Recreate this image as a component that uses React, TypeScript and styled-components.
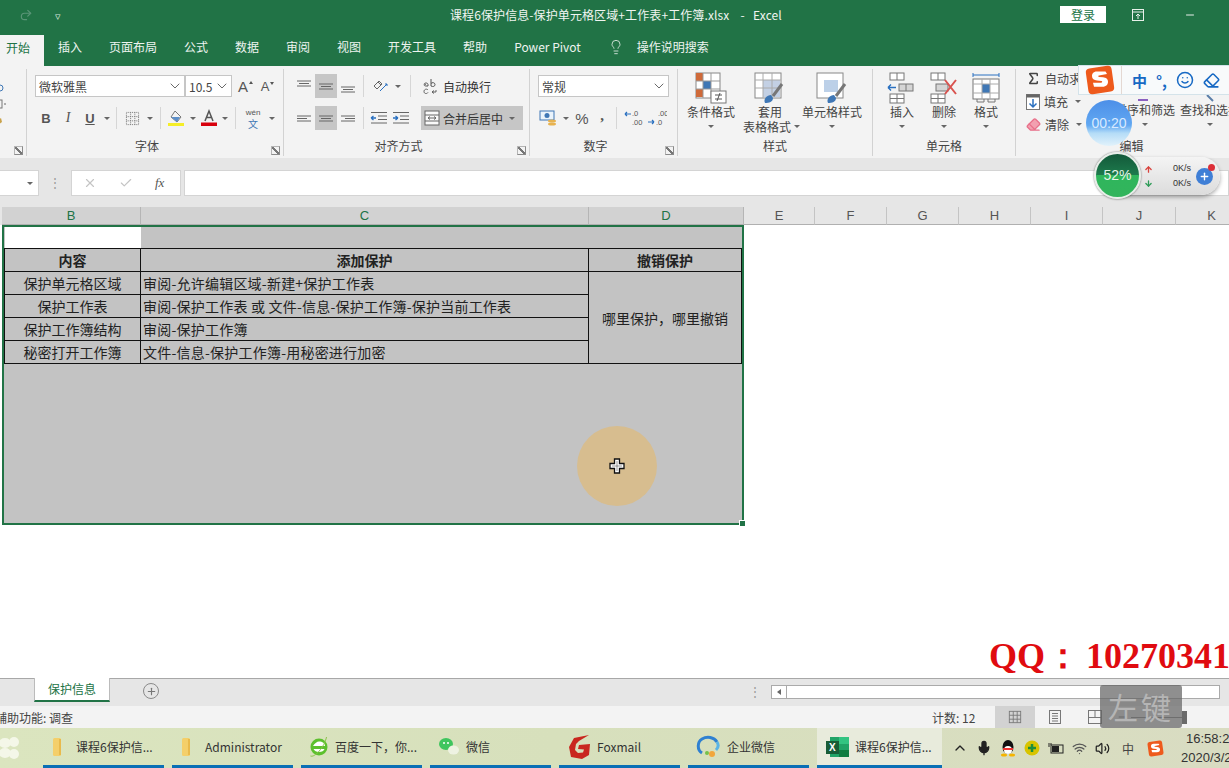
import React from "react";
import styled, { createGlobalStyle } from "styled-components";
import { Lightbulb, ChevronDown, Check, X, Plus, Mic, Wifi, Volume2, ChevronUp, Sigma, Eraser, ArrowDown, ArrowUp, Minus, Redo2, Smile } from "lucide-react";

const GlobalStyle = createGlobalStyle`
  html, body { margin: 0; padding: 0; height: 100%; overflow: hidden; background: #fff; }
  body { font-family: "Noto Sans CJK SC", "Liberation Sans", sans-serif; font-size: 12px; color: #333; }
  #root { height: 100%; }
`;

const Page = styled.div`
  position: relative;
  width: 1229px;
  height: 768px;
  overflow: hidden;
  display: flex;
  flex-direction: column;
`;

/* title bar + tabs */
const TitleBar = styled.div`
  height: 33px;
  background: #217346;
  color: #f0f5f1;
  display: flex;
  align-items: center;
  flex: none;
  padding-bottom: 4px;
  box-sizing: border-box;
`;
const Qat = styled.div`
  width: 450px;
  flex: none;
  display: flex;
  align-items: center;
  gap: 22px;
  padding-left: 19px;
  box-sizing: border-box;
  color: #d5e5da;
  font-size: 11px;
`;
const Title = styled.div`
  width: 610px;
  flex: none;
  white-space: pre;
  letter-spacing: 0.1px;
`;
const Login = styled.div`
  width: 46px;
  height: 17px;
  flex: none;
  line-height: 17px;
  background: #fff;
  color: #217346;
  text-align: center;
  margin-right: 6px;
`;
const WinBtn = styled.div`
  width: 52px;
  flex: none;
  display: flex;
  justify-content: center;
  color: #e8f0ea;
`;
const TabRow = styled.div`
  height: 33px;
  background: #217346;
  display: flex;
  align-items: flex-start;
  flex: none;
  color: #eef4f0;
  gap: 27px;
`;
const ActiveTab = styled.div`
  width: 44px;
  height: 31px;
  margin-top: 2px;
  line-height: 25px;
  background: #f3f3f3;
  color: #217346;
  padding-left: 6px;
  box-sizing: border-box;
  margin-right: -13px;
`;
const TabItem = styled.div`
  height: 28px;
  line-height: 28px;
  display: flex;
  align-items: center;
  gap: 13px;
`;

/* ribbon */
const Ribbon = styled.div`
  height: 92px;
  background: #f3f3f3;
  flex: none;
  display: flex;
`;
const Group = styled.div<{ $w: number }>`
  position: relative;
  width: ${(p) => p.$w}px;
  flex: none;
  box-sizing: border-box;
  border-right: 1px solid #d2d2d2;
  margin: 3px 0 2px;
  display: flex;
  flex-direction: column;
`;
const GroupBody = styled.div<{ $pad?: number }>`
  flex: 1;
  min-height: 0;
  padding: 5px 0 0 ${(p) => p.$pad ?? 8}px;
  display: flex;
  flex-direction: column;
  gap: 8px;
`;
const StackBody = styled.div<{ $pad?: number }>`
  flex: 1;
  min-height: 0;
  display: flex;
  padding-left: ${(p) => p.$pad ?? 0}px;
`;
const GroupLabel = styled.div<{ $launcher?: boolean }>`
  height: 22px;
  line-height: 24px;
  text-align: center;
  color: #444;
  flex: none;
  padding-right: ${(p) => (p.$launcher ? 16 : 0)}px;
`;
const Launcher = styled.div`
  position: absolute;
  right: 3px;
  bottom: 1px;
  width: 7px;
  height: 7px;
  border: 1px solid #8a8a8a;
  border-top-color: #b5b5b5;
  border-left-color: #b5b5b5;
  background: linear-gradient(45deg, transparent 42%, #777 42% 58%, transparent 58%);
`;
const ClipStub = styled.div`
  margin: 15px 0 0 -4px;
`;
const ToolRow = styled.div`
  display: flex;
  align-items: center;
  height: 24px;
`;
const Combo = styled.div<{ $w: number }>`
  width: ${(p) => p.$w}px;
  height: 22px;
  box-sizing: border-box;
  background: #fff;
  border: 1px solid #c6c6c6;
  display: flex;
  align-items: center;
  justify-content: space-between;
  padding: 0 1px 0 3px;
  color: #444;
  flex: none;
  overflow: hidden;
`;
const Tool = styled.div<{ $w?: number; $on?: boolean }>`
  width: ${(p) => p.$w ?? 22}px;
  height: 24px;
  flex: none;
  display: flex;
  align-items: center;
  justify-content: center;
  color: #555;
  background: ${(p) => (p.$on ? "#c6c6c6" : "transparent")};
  font-size: 12px;
`;
const GrowFont = styled.span<{ $big?: boolean; $down?: boolean }>`
  position: relative;
  font-family: "Liberation Sans", sans-serif;
  font-size: ${(p) => (p.$big ? 15 : 13)}px;
  color: #555;
  &::after {
    content: "";
    position: absolute;
    right: -5px;
    top: 3px;
    border: 2.5px solid transparent;
    border-top: 0;
    border-bottom: 3px solid #555;
    transform: ${(p) => (p.$down ? "rotate(180deg)" : "none")};
  }
`;
const BoldMark = styled.span`
  font-family: "Liberation Sans", sans-serif;
  font-weight: 700;
  font-size: 13px;
  color: #555;
`;
const ItalicMark = styled.span`
  font-family: "Liberation Serif", serif;
  font-style: italic;
  font-size: 14px;
  color: #555;
`;
const UnderMark = styled.span`
  font-family: "Liberation Sans", sans-serif;
  font-weight: 700;
  font-size: 13px;
  color: #555;
  text-decoration: underline;
`;
const PercentMark = styled.span`
  font-family: "Liberation Sans", sans-serif;
  font-size: 15px;
  color: #555;
`;
const CommaMark = styled.span`
  font-family: "Liberation Serif", serif;
  font-weight: 700;
  font-size: 15px;
  color: #555;
  margin-top: -6px;
`;
const Wen = styled.div`
  display: flex;
  flex-direction: column;
  align-items: center;
  gap: 1px;
  font-family: "Liberation Sans", sans-serif;
  font-size: 8px;
  line-height: 9px;
  color: #555;
`;
const WenGlyph = styled.span`
  font-family: "Noto Sans CJK SC", sans-serif;
  font-size: 10px;
  line-height: 11px;
  color: #3f77b5;
`;
const Caret = styled.span`
  width: 0;
  height: 0;
  border: 3px solid transparent;
  border-top: 3px solid #666;
  border-bottom: 0;
  margin: 0 3px;
  flex: none;
  display: inline-block;
`;
const BigCaret = styled(Caret)`
  margin-top: 6px;
`;
const Sep = styled.div<{ $m?: number }>`
  width: 1px;
  height: 22px;
  background: #d6d6d6;
  margin: 0 ${(p) => p.$m ?? 6}px;
  flex: none;
`;
const WrapText = styled.span`
  color: #333;
  white-space: nowrap;
`;
const MergeTool = styled.div`
  width: 102px;
  height: 24px;
  margin-left: 9px;
  flex: none;
  display: flex;
  align-items: center;
  gap: 3px;
  padding-left: 3px;
  box-sizing: border-box;
  background: #c6c6c6;
  color: #333;
  white-space: nowrap;
`;
const BigTool = styled.div<{ $w: number }>`
  width: ${(p) => p.$w}px;
  flex: none;
  display: flex;
  flex-direction: column;
  align-items: center;
  padding-top: 3px;
  line-height: 15px;
  color: #444;
  white-space: nowrap;
`;
const BigIcon = styled.div`
  height: 32px;
  display: flex;
  align-items: flex-start;
`;
const TwoWord = styled.div`
  display: flex;
  align-items: center;
  margin-left: 6px;
`;
const EditRow = styled.div`
  height: 23px;
  display: flex;
  align-items: center;
  gap: 4px;
  color: #444;
  white-space: nowrap;
`;
const SigmaBox = styled.div`
  width: 15px;
  flex: none;
  display: flex;
`;
const EditBody = styled.div`
  margin-top: -2px;
  padding-left: 10px;
  display: flex;
  flex: 1;
  min-height: 0;
`;
const EditStack = styled.div`
  width: 89px;
  flex: none;
`;
const FindTool = styled(BigTool)`
  margin-left: 5px;
`;

/* formula bar */
const FormulaBand = styled.div`
  height: 49px;
  flex: none;
  background: #e6e6e6;
  padding-top: 12px;
  box-sizing: border-box;
  display: flex;
  align-items: flex-start;
`;
const NameBox = styled.div`
  width: 39px;
  height: 26px;
  background: #fff;
  border: 1px solid #d4d4d4;
  border-left: 0;
  box-sizing: border-box;
  display: flex;
  align-items: center;
  justify-content: flex-end;
  padding-right: 2px;
`;
const Grip = styled.div`
  width: 32px;
  height: 26px;
  line-height: 24px;
  text-align: center;
  color: #999;
`;
const FxBox = styled.div`
  width: 110px;
  height: 26px;
  background: #fff;
  border: 1px solid #d4d4d4;
  box-sizing: border-box;
  display: flex;
  align-items: center;
  color: #c4c4c4;
  margin-right: 3px;
  padding-left: 11px;
  gap: 22px;
`;
const Fx = styled.span`
  font-family: "Liberation Serif", serif;
  font-style: italic;
  font-size: 13px;
  color: #555;
`;
const FormulaInput = styled.div`
  flex: 1;
  height: 26px;
  background: #fff;
  border: 1px solid #d4d4d4;
  box-sizing: border-box;
`;

/* sheet */
const HeaderRow = styled.div`
  height: 18px;
  flex: none;
  display: flex;
  background: #e6e6e6;
  padding-left: 2px;
`;
const ColHead = styled.div<{ $w: number; $sel?: boolean }>`
  width: ${(p) => p.$w}px;
  flex: none;
  box-sizing: border-box;
  text-align: center;
  line-height: 18px;
  font-family: "Liberation Sans", sans-serif;
  font-size: 13px;
  background: ${(p) => (p.$sel ? "#d2d2d2" : "#e6e6e6")};
  color: ${(p) => (p.$sel ? "#217346" : "#555")};
  border-right: 1px solid ${(p) => (p.$sel ? "#b5b5b5" : "#c4c4c4")};
  border-bottom: 1px solid #b0b0b0;
`;
const Sheet = styled.div`
  flex: 1;
  background: #fff;
  padding-left: 2px;
  min-height: 0;
`;
const Selection = styled.div`
  position: relative;
  width: 742px;
  height: 300px;
  box-sizing: border-box;
  border: 2px solid #217346;
  background: #c3c3c3;
`;
const Handle = styled.div`
  position: absolute;
  right: -4px;
  bottom: -4px;
  width: 5px;
  height: 5px;
  background: #217346;
  border: 1px solid #fff;
`;
const Table = styled.table`
  border-collapse: collapse;
  table-layout: fixed;
  width: 737px;
  font-size: 14px;
  color: #222;
`;
const Cell = styled.td<{ $head?: boolean; $left?: boolean }>`
  height: 22px;
  padding: 0 2px;
  border: 1px solid #111;
  line-height: 20px;
  text-align: ${(p) => (p.$left ? "left" : "center")};
  font-weight: ${(p) => (p.$head ? 700 : 400)};
  letter-spacing: ${(p) => (p.$left ? 0.22 : 0)}px;
  white-space: nowrap;
`;
const BlankCell = styled.td<{ $white?: boolean }>`
  height: 21px;
  padding: 0;
  background: ${(p) => (p.$white ? "#fff" : "transparent")};
`;

/* sheet tabs and status */
const TabsBar = styled.div`
  height: 28px;
  flex: none;
  background: #e6e6e6;
  border-top: 1px solid #a8a8a8;
  box-sizing: border-box;
  display: flex;
  align-items: flex-start;
  padding-left: 34px;
`;
const SheetTab = styled.div`
  width: 76px;
  height: 24px;
  margin-top: -1px;
  background: #fff;
  border-bottom: 2px solid #217346;
  border-right: 1px solid #bbb;
  border-left: 1px solid #bbb;
  box-sizing: border-box;
  color: #217346;
  text-align: center;
  line-height: 22px;
`;
const AddSheet = styled.div`
  width: 16px;
  height: 16px;
  margin: 4px 0 0 33px;
  border: 1px solid #8a8a8a;
  border-radius: 50%;
  box-sizing: border-box;
  display: flex;
  align-items: center;
  justify-content: center;
  color: #777;
`;
const TabsGrip = styled.div`
  margin-left: 590px;
  width: 22px;
  color: #999;
  line-height: 24px;
`;
const HScroll = styled.div`
  width: 449px;
  height: 14px;
  margin-top: 6px;
  background: #fff;
  border: 1px solid #aaa;
  box-sizing: border-box;
`;
const ScrollArrow = styled.div`
  width: 14px;
  height: 12px;
  border-right: 1px solid #aaa;
  display: flex;
  align-items: center;
  justify-content: center;
  &::before {
    content: "";
    border: 3px solid transparent;
    border-right: 4px solid #666;
    border-left: 0;
  }
`;
const StatusBar = styled.div`
  height: 22px;
  flex: none;
  background: #f3f3f3;
  display: flex;
  align-items: center;
  color: #444;
`;
const StatusText = styled.div`
  margin-left: -5px;
  width: 937px;
  flex: none;
  white-space: nowrap;
`;
const Count = styled.div`
  width: 63px;
  flex: none;
`;
const ViewBtn = styled.div<{ $on?: boolean }>`
  width: 40px;
  height: 22px;
  flex: none;
  display: flex;
  align-items: center;
  justify-content: center;
  background: ${(p) => (p.$on ? "#d2d2d2" : "transparent")};
  color: #666;
`;
const Zoom = styled.div`
  margin-left: 2px;
  display: flex;
  align-items: center;
  gap: 4px;
  color: #666;
`;
const ZoomTrack = styled.div`
  width: 56px;
  height: 1px;
  background: #888;
  position: relative;
`;
const ZoomThumb = styled.div`
  position: absolute;
  right: 0;
  top: -6px;
  width: 5px;
  height: 13px;
  background: #6a6a6a;
`;

/* taskbar */
const Taskbar = styled.div`
  height: 40px;
  flex: none;
  background: linear-gradient(90deg, #dbe5bf 0%, #d7e0bc 45%, #d9dcc2 100%);
  display: flex;
  align-items: stretch;
  overflow: hidden;
`;
const Start = styled.div`
  width: 43px;
  flex: none;
  display: flex;
  align-items: center;
`;
const TaskGroup = styled.div`
  display: flex;
  gap: 8px;
  width: 902px;
  flex: none;
`;
const TaskItem = styled.div<{ $w?: number; $active?: boolean }>`
  width: ${(p) => p.$w ?? 121}px;
  flex: none;
  box-sizing: border-box;
  padding-left: 8px;
  border-bottom: 3px solid #0a6fb5;
  display: flex;
  align-items: center;
  gap: 6px;
  color: #333;
  white-space: nowrap;
  background: ${(p) => (p.$active ? "#e8ebdc" : "transparent")};
`;
const Tray = styled.div`
  flex: 1;
  min-width: 0;
  display: flex;
  align-items: center;
  padding-left: 7px;
  gap: 8px;
  color: #222;
  & > * {
    flex: none;
  }
`;
const TrayIme = styled.span`
  margin-left: 4px;
  width: 12px;
  color: #444;
`;
const TrayLogo = styled.span`
  margin-left: 5px;
  display: flex;
`;
const ClockBox = styled.div`
  margin-left: 9px;
  font-family: "Liberation Sans", sans-serif;
  font-size: 13px;
  line-height: 19px;
  white-space: nowrap;
  color: #333;
`;
const ClockTime = styled.div`
  padding-left: 5px;
`;

/* things lying over the window */
const Watermark = styled.div`
  position: absolute;
  left: 989px;
  top: 634px;
  font-family: "Liberation Serif", serif;
  font-weight: 700;
  font-size: 36px;
  line-height: 44px;
  color: #e00b10;
  white-space: nowrap;
`;
const WatermarkNumber = styled.span`
  margin-left: 5px;
`;
const KeyHint = styled.div`
  position: absolute;
  left: 1100px;
  top: 685px;
  width: 82px;
  height: 43px;
  border-radius: 3px;
  background: rgba(100, 100, 100, 0.72);
  color: #b5b5b5;
  font-size: 30px;
  line-height: 42px;
  text-align: center;
  letter-spacing: 3px;
`;
const Halo = styled.div`
  position: absolute;
  left: 577px;
  top: 426px;
  width: 80px;
  height: 80px;
  border-radius: 50%;
  background: #d7bd8f;
  display: flex;
  align-items: center;
  justify-content: center;
`;
const ImeBar = styled.div`
  position: absolute;
  left: 1078px;
  top: 65px;
  width: 162px;
  height: 30px;
  background: #f8fafb;
  border: 1px solid #d4e3ea;
  box-sizing: border-box;
  display: flex;
  align-items: center;
  color: #1769c4;
  font-weight: 700;
  font-size: 15px;
`;
const ImeLogo = styled.div`
  width: 42px;
  height: 100%;
  border-right: 1px solid #e4d8d2;
  display: flex;
  align-items: center;
  justify-content: center;
  margin-right: 10px;
  flex: none;
`;
const ImeIcons = styled.div`
  display: flex;
  align-items: center;
  gap: 9px;
`;
const Timer = styled.div`
  position: absolute;
  left: 1086px;
  top: 100px;
  width: 46px;
  height: 46px;
  border-radius: 50%;
  background: linear-gradient(180deg, #4c8fe8 0%, #62a8f2 55%, #b4dcf7 72%, #e2f2fb 100%);
  color: #d8eaff;
  font-family: "Liberation Sans", sans-serif;
  font-size: 14px;
  line-height: 46px;
  text-align: center;
`;
const NetPill = styled.div`
  position: absolute;
  left: 1098px;
  top: 157px;
  width: 122px;
  height: 38px;
  border-radius: 19px;
  background: linear-gradient(180deg, #f4f4f4, #dcdcdc);
  box-shadow: 0 2px 4px rgba(0, 0, 0, 0.35);
  display: flex;
  align-items: center;
  padding-left: 46px;
  box-sizing: border-box;
  font-family: "Liberation Sans", sans-serif;
  font-size: 9px;
  color: #333;
  line-height: 15px;
`;
const Gauge = styled.div`
  position: absolute;
  left: 1094px;
  top: 152px;
  width: 47px;
  height: 47px;
  box-sizing: border-box;
  border-radius: 50%;
  border: 2px solid #e8eee9;
  box-shadow: 0 0 2px rgba(0, 0, 0, 0.6);
  background: linear-gradient(180deg, #13593a 0%, #1d7a4c 48%, #2fb65c 50%, #32b45c 100%);
  color: #e4f5e8;
  font-family: "Liberation Sans", sans-serif;
  font-size: 14px;
  line-height: 43px;
  text-align: center;
`;
const NetArrows = styled.div`
  width: 10px;
  flex: none;
  display: flex;
  flex-direction: column;
  gap: 5px;
`;
const NetSpeed = styled.div`
  width: 23px;
  flex: none;
  margin-left: 19px;
`;
const Boost = styled.div`
  position: relative;
  width: 17px;
  height: 17px;
  border-radius: 50%;
  background: #3f7fd6;
  display: flex;
  align-items: center;
  justify-content: center;
  color: #fff;
  &::after {
    content: "";
    position: absolute;
    right: -2px;
    top: -4px;
    width: 7px;
    height: 7px;
    border-radius: 50%;
    background: #dc2f38;
  }
`;

/* small drawings */
const AlignIcon = ({ v = "m", h = "c" }: { v?: "t" | "m" | "b"; h?: "l" | "c" | "r" }) => {
  const y0 = v === "t" ? 3 : v === "m" ? 6 : 9;
  const ws = h === "l" ? [[1, 14], [1, 10], [1, 14]] : h === "c" ? [[1, 14], [3, 10], [1, 14]] : [[1, 14], [5, 10], [1, 14]];
  return (
    <svg width="16" height="16" viewBox="0 0 16 16" fill="none" stroke="#666" strokeWidth="1">
      {ws.map(([x, w], i) => (
        <line key={i} x1={x} x2={x + w} y1={y0 + i * 2.5} y2={y0 + i * 2.5} />
      ))}
    </svg>
  );
};
const GridIcon = ({ size = 15, color = "#777", dotted }: { size?: number; color?: string; dotted?: boolean }) => (
  <svg width={size} height={size} viewBox="0 0 16 16" fill="none" stroke={color} strokeDasharray={dotted ? "1 1" : undefined}>
    <rect x="1.5" y="1.5" width="13" height="13" />
    <path d="M1.5 6h13M1.5 10.5h13M6 1.5v13M10.5 1.5v13" />
  </svg>
);
const PageViewIcon = () => (
  <svg width="14" height="14" viewBox="0 0 14 14" fill="none" stroke="#777">
    <rect x="1.5" y=".5" width="11" height="13" />
    <path d="M4 3.500h6M4 6h6M4 8.500h6M4 11h6" />
  </svg>
);
const BreakViewIcon = () => (
  <svg width="14" height="14" viewBox="0 0 14 14" fill="none" stroke="#777">
    <rect x=".5" y=".5" width="13" height="13" />
    <path d="M7 .5v7M.5 7.500h13" />
  </svg>
);
const RestoreIcon = () => (
  <svg width="12" height="12" viewBox="0 0 12 12" fill="none" stroke="currentColor">
    <rect x=".5" y=".5" width="11" height="11" />
    <path d="M.5 3h11M6 10V5M4 7l2-2 2 2" />
  </svg>
);
const FillColorIcon = () => (
  <svg width="18" height="18" viewBox="0 0 18 18">
    <path d="M8 2l6 6-4 5-6-5z" fill="#f4f4f4" stroke="#777" />
    <path d="M4 8h9l-3 5z" fill="#5d8fc9" />
    <rect x="1" y="14" width="16" height="3" fill="#f5ee27" />
  </svg>
);
const FontColorIcon = () => (
  <svg width="18" height="18" viewBox="0 0 18 18">
    <path d="M5 12L9 2l4 10M6.500 8.500h5" fill="none" stroke="#555" strokeWidth="1.500" />
    <rect x="1" y="13.500" width="16" height="3.500" fill="#d8000c" />
  </svg>
);
const WrapIcon = () => (
  <svg width="16" height="18" viewBox="0 0 16 18" fill="none" stroke="#555">
    <path d="M2 7.500c0-2 4-2 4 0V9H4c-2.500 0-2-2 0-1.500M9 2v7c2 1 4 .5 4-1.500s-3-2.500-4-1" />
    <path d="M6 13c-1-1.500-4-1-4 1.500S5 17 6 15.500M10 15h4v-2M10 15l2-1.500M10 15l2 1.500" strokeWidth=".9" />
  </svg>
);
const MergeIcon = () => (
  <svg width="16" height="16" viewBox="0 0 16 16" fill="#fafafa" stroke="#666">
    <rect x="1" y="1" width="14" height="14" />
    <path d="M1 5h14M1 11h14M4 8h8M4 8l2-1.500M4 8l2 1.500M12 8l-2-1.500M12 8l-2 1.500" />
  </svg>
);
const IndentIcon = ({ out }: { out?: boolean }) => (
  <svg width="18" height="16" viewBox="0 0 18 16" fill="none" stroke="#666">
    <path d="M1 2.500h16M8 6h9M8 9.500h9M1 13h16" />
    <path d={out ? "M6 8H1M1 8l2.500-2M1 8l2.500 2" : "M1 8h5M6 8L3.500 6M6 8l-2.500 2"} stroke="#2a70c0" strokeWidth="1.300" />
  </svg>
);
const OrientIcon = () => (
  <svg width="18" height="16" viewBox="0 0 18 16" fill="none" stroke="#666">
    <path d="M3 8l5-5 3 3-5 5zM7 4l3 3" />
    <path d="M9 13l7-7M14 6h2v2" stroke="#2a70c0" />
  </svg>
);
const CurrencyIcon = () => (
  <svg width="20" height="18" viewBox="0 0 20 18">
    <rect x="1" y="2" width="14" height="9" fill="#eaf3fb" stroke="#3f77b5" />
    <circle cx="8" cy="6.500" r="2.500" fill="#3f77b5" />
    <ellipse cx="13" cy="12" rx="4" ry="1.500" fill="#e7b24f" />
    <ellipse cx="13" cy="15" rx="4" ry="1.500" fill="#e7b24f" />
  </svg>
);
const DecimalIcon = ({ down }: { down?: boolean }) => (
  <svg width="20" height="18" viewBox="0 0 20 18" fill="none" stroke="#2a70c0">
    <path d={down ? "M1 13h6M7 13l-2-2M7 13l-2 2" : "M8 5H2M2 5l2-2M2 5l2 2"} strokeWidth="1.200" />
    <text x={down ? 11 : 9} y="7" fontSize="7.500" stroke="none" fill="#555" fontFamily="Liberation Sans">{down ? ".00" : ".0"}</text>
    <text x="9" y="16" fontSize="7.500" stroke="none" fill="#555" fontFamily="Liberation Sans">{down ? ".0" : ".00"}</text>
  </svg>
);
const CondFormatIcon = () => (
  <svg width="32" height="32" viewBox="0 0 32 32" fill="none">
    <rect x="1" y="1" width="24" height="25" fill="#fff" stroke="#888" />
    <rect x="1" y="1" width="7" height="8" fill="#cf6a3a" />
    <rect x="8" y="9" width="8" height="8" fill="#3f77b5" />
    <rect x="1" y="17" width="7" height="8" fill="#cf6a3a" />
    <path d="M1 9h24M1 17h24M8 1v25M16 1v25" stroke="#999" />
    <rect x="16" y="19" width="15" height="12" fill="#fff" stroke="#777" />
    <path d="M20 23h7M20 27h7M25 21l-3 8" stroke="#555" />
  </svg>
);
const TableFormatIcon = () => (
  <svg width="32" height="32" viewBox="0 0 32 32" fill="none">
    <rect x="1" y="1" width="26" height="25" fill="#fff" stroke="#888" />
    <rect x="9" y="8" width="17" height="17" fill="#c3d0e4" />
    <path d="M1 8h26M1 16h26M9 1v25M18 1v25" stroke="#aaa" />
    <path d="M28 12L19 24" stroke="#777" strokeWidth="3" />
    <path d="M11 31c-2-4 2-8 6-8l2 3c0 4-4 5-8 5z" fill="#3f77b5" />
  </svg>
);
const CellStyleIcon = () => (
  <svg width="32" height="32" viewBox="0 0 32 32" fill="none">
    <rect x="1" y="1" width="26" height="25" fill="#fff" stroke="#888" />
    <rect x="8" y="8" width="14" height="12" fill="#bcd0e8" />
    <path d="M29 12L20 24" stroke="#777" strokeWidth="3" />
    <path d="M12 31c-2-4 2-8 6-8l2 3c0 4-4 5-8 5z" fill="#3f77b5" />
  </svg>
);
const InsertCellIcon = () => (
  <svg width="30" height="32" viewBox="0 0 30 32" fill="none" stroke="#777">
    <rect x="3" y="1" width="14" height="7" fill="#fff" />
    <path d="M10 1v7" />
    <rect x="12" y="12" width="14" height="7" fill="#d5d5d5" />
    <path d="M19 12v7" />
    <path d="M1 15.500h8M1 15.500l3-3M1 15.500l3 3" stroke="#2a70c0" strokeWidth="1.400" />
    <rect x="3" y="22" width="14" height="9" fill="#fff" />
    <path d="M10 22v9M3 26.500h14" />
  </svg>
);
const DeleteCellIcon = () => (
  <svg width="30" height="32" viewBox="0 0 30 32" fill="none" stroke="#777">
    <rect x="2" y="1" width="14" height="7" fill="#fff" />
    <path d="M9 1v7" />
    <rect x="7" y="12" width="12" height="7" fill="#d5d5d5" />
    <rect x="2" y="22" width="14" height="9" fill="#fff" />
    <path d="M9 22v9M2 26.500h14" />
    <path d="M16 8l11 14M27 8L16 22" stroke="#d9534f" strokeWidth="2" />
  </svg>
);
const FormatCellIcon = () => (
  <svg width="30" height="32" viewBox="0 0 30 32" fill="none" stroke="#777">
    <path d="M2 3h26M2 1v4M28 1v4" stroke="#2a70c0" />
    <rect x="2" y="7" width="26" height="20" fill="#fff" />
    <rect x="11" y="12" width="8" height="9" fill="#3f77b5" stroke="none" />
    <path d="M2 12h26M2 21h26M11 7v20M19 7v20" stroke="#aaa" />
    <path d="M6 27v3h7v-3M17 27v3h7v-3" />
  </svg>
);
const SortIcon = () => (
  <svg width="26" height="32" viewBox="0 0 26 32" fill="none" stroke="#8a5fc0" strokeWidth="2">
    <path d="M6 24h14M6 30h10" />
  </svg>
);
const FindIcon = () => (
  <svg width="26" height="32" viewBox="0 0 26 32" fill="none" stroke="#5a7ea8" strokeWidth="2">
    <path d="M10 25l6 6" />
  </svg>
);
const FillIcon = () => (
  <svg width="14" height="16" viewBox="0 0 14 16">
    <rect x=".5" y=".5" width="13" height="15" fill="#fff" stroke="#777" />
    <rect x=".5" y=".5" width="13" height="3" fill="#666" />
    <path d="M7 5v8M3.500 9.500L7 13l3.500-3.500" fill="none" stroke="#2a70c0" strokeWidth="1.500" />
  </svg>
);
const ClipboardStub = () => (
  <svg width="10" height="44" viewBox="0 0 10 44" fill="none">
    <circle cx="4" cy="4" r="3" stroke="#3f77b5" />
    <rect x="0" y="16" width="6" height="8" stroke="#777" />
    <path d="M8 20l2 0" stroke="#666" />
    <path d="M0 38l5-4 1 4-4 3z" fill="#c9a24a" />
  </svg>
);
const SogouLogo = ({ size = 30 }: { size?: number }) => (
  <svg width={size} height={size} viewBox="0 0 30 30">
    <rect x="2" y="2" width="26" height="26" rx="4" fill="#ee5a1c" transform="rotate(-8 15 15)" />
    <path d="M22 9l-1.500-2.500H12C8 6.500 7 9 7 11c0 3 2 4 5 4.500l4.500.5c1 .2 1 1.800-.5 1.800H8l1 4h8.500c4 0 5.500-2.500 5.500-5 0-3-2-4-5-4.500l-4-.4c-1.200-.2-1-1.400 0-1.400z" fill="#fff" />
  </svg>
);
const CursorIcon = () => (
  <svg width="16" height="16" viewBox="0 0 16 16">
    <path d="M5.500 1h5v4.500H15v5h-4.500V15h-5v-4.500H1v-5h4.500z" fill="#fff" stroke="#111" strokeWidth="1.300" />
    <path d="M8 3v10M3 8h10" stroke="#555" strokeWidth="0.600" />
  </svg>
);
const FolderIcon = () => (
  <svg width="19" height="20" viewBox="0 0 19 20">
    <rect x="2" y="1" width="8" height="18" rx="1.500" fill="#f4cf6a" />
    <rect x="8" y="2" width="2" height="16" fill="#e9ba4c" />
  </svg>
);
const IeIcon = () => (
  <svg width="20" height="24" viewBox="0 0 20 24">
    <circle cx="10" cy="12" r="8.500" fill="#5cc02d" />
    <path d="M4 11h12c0-3-2.500-4.500-6-4.500-2 0-4 1.500-6 4.500zM4.500 14h11c-.6 2-2.600 3-5.500 3-2.500 0-4.500-1-5.500-3z" fill="#fff" />
    <path d="M1.500 21c4 2 14-9 16-19" stroke="#8ac34a" fill="none" />
  </svg>
);
const WechatIcon = () => (
  <svg width="22" height="20" viewBox="0 0 22 20">
    <ellipse cx="8" cy="7" rx="7" ry="6" fill="#3fc55e" />
    <ellipse cx="15.500" cy="13" rx="5.500" ry="4.500" fill="#eef2e2" />
    <circle cx="6" cy="6" r="1" fill="#fff" />
    <circle cx="10" cy="6" r="1" fill="#fff" />
  </svg>
);
const FoxmailIcon = () => (
  <svg width="24" height="26" viewBox="0 0 24 26">
    <path d="M22 1L7 4 2 13l2 10 11 2 7-4 1-11-11 1-1 4 6 .5-1 3-5 .5-3-3 1-6 3-3z" fill="#c9271f" />
  </svg>
);
const WeComIcon = () => (
  <svg width="25" height="24" viewBox="0 0 25 24" fill="none">
    <path d="M6 18C1 15 1 7 6 4c5-3 12-2 15 3" stroke="#2f80d1" strokeWidth="3" />
    <path d="M21 7c2 3 1 6-1 8" stroke="#5bb4e6" strokeWidth="3" />
    <circle cx="16" cy="19" r="3" fill="#f2a63b" />
    <circle cx="11" cy="18" r="2" fill="#77c04a" />
  </svg>
);
const ExcelIcon = () => (
  <svg width="24" height="24" viewBox="0 0 24 24">
    <rect x="5" y="2" width="19" height="20" fill="#21a366" />
    <rect x="14" y="2" width="10" height="7" fill="#33c481" />
    <rect x="14" y="15" width="10" height="7" fill="#107c41" />
    <rect x="1" y="6" width="13" height="13" fill="#185c37" />
    <text x="4" y="16" fontSize="10" fontWeight="700" fill="#fff" fontFamily="Liberation Sans">X</text>
  </svg>
);
const QqIcon = () => (
  <svg width="16" height="18" viewBox="0 0 16 18">
    <ellipse cx="8" cy="8" rx="5.500" ry="7" fill="#111" />
    <ellipse cx="8" cy="11" rx="4" ry="4" fill="#fff" />
    <rect x="3" y="9" width="10" height="2" fill="#e33" />
    <ellipse cx="4" cy="16" rx="3" ry="1.500" fill="#f5b400" />
    <ellipse cx="12" cy="16" rx="3" ry="1.500" fill="#f5b400" />
  </svg>
);
const GuardIcon = () => (
  <svg width="16" height="16" viewBox="0 0 16 16">
    <circle cx="8" cy="8" r="7.500" fill="#d8c400" />
    <path d="M8 4v8M4 8h8" stroke="#1d8e3c" strokeWidth="2.500" />
  </svg>
);
const BatteryIcon = () => (
  <svg width="16" height="12" viewBox="0 0 16 12">
    <rect x="3" y="3" width="12" height="8" fill="none" stroke="#222" />
    <rect x="4" y="4" width="7" height="6" fill="#222" />
    <path d="M1 1v4M3 1v2" stroke="#222" />
  </svg>
);
const StartIcon = () => (
  <svg width="22" height="24" viewBox="0 0 22 24" fill="#f4f7e8">
    <ellipse cx="5" cy="7" rx="6" ry="5" />
    <ellipse cx="14" cy="6" rx="5" ry="5" />
    <ellipse cx="5" cy="17" rx="6" ry="5" />
    <ellipse cx="14" cy="18" rx="5" ry="5" />
  </svg>
);

const App = () => (
  <Page>
    <GlobalStyle />
    <TitleBar>
      <Qat>
        <Redo2 size={14} color="#5a9577" />
        <span>▿</span>
      </Qat>
      <Title>{"课程6保护信息-保护单元格区域+工作表+工作簿.xlsx    -   Excel"}</Title>
      <Login>登录</Login>
      <WinBtn>
        <RestoreIcon />
      </WinBtn>
      <WinBtn>
        <Minus size={12} />
      </WinBtn>
    </TitleBar>
    <TabRow>
      <ActiveTab>开始</ActiveTab>
      <TabItem>插入</TabItem>
      <TabItem>页面布局</TabItem>
      <TabItem>公式</TabItem>
      <TabItem>数据</TabItem>
      <TabItem>审阅</TabItem>
      <TabItem>视图</TabItem>
      <TabItem>开发工具</TabItem>
      <TabItem>帮助</TabItem>
      <TabItem>Power Pivot</TabItem>
      <TabItem>
        <Lightbulb size={16} strokeWidth={1.2} />
        操作说明搜索
      </TabItem>
    </TabRow>

    <Ribbon>
      <Group $w={27}>
        <ClipStub>
          <ClipboardStub />
        </ClipStub>
        <Launcher />
      </Group>
      <Group $w={257}>
        <GroupBody>
          <ToolRow>
            <Combo $w={150}>
              微软雅黑
              <ChevronDown size={16} strokeWidth={1.2} />
            </Combo>
            <Combo $w={47}>
              10.5
              <ChevronDown size={16} strokeWidth={1.2} />
            </Combo>
            <Tool $w={22}>
              <GrowFont $big>A</GrowFont>
            </Tool>
            <Tool $w={22}>
              <GrowFont $down>A</GrowFont>
            </Tool>
          </ToolRow>
          <ToolRow>
            <Tool>
              <BoldMark>B</BoldMark>
            </Tool>
            <Tool>
              <ItalicMark>I</ItalicMark>
            </Tool>
            <Tool>
              <UnderMark>U</UnderMark>
            </Tool>
            <Caret />
            <Sep $m={3} />
            <Tool $w={24}>
              <GridIcon dotted />
            </Tool>
            <Caret />
            <Sep $m={4} />
            <Tool $w={22}>
              <FillColorIcon />
            </Tool>
            <Caret />
            <Tool $w={20}>
              <FontColorIcon />
            </Tool>
            <Caret />
            <Sep $m={4} />
            <Tool $w={26}>
              <Wen>
                wén
                <WenGlyph>文</WenGlyph>
              </Wen>
            </Tool>
            <Caret />
          </ToolRow>
        </GroupBody>
        <GroupLabel $launcher>字体</GroupLabel>
        <Launcher />
      </Group>
      <Group $w={246}>
        <GroupBody $pad={9}>
          <ToolRow>
            <Tool>
              <AlignIcon v="t" />
            </Tool>
            <Tool $on>
              <AlignIcon v="m" />
            </Tool>
            <Tool>
              <AlignIcon v="b" />
            </Tool>
            <Sep $m={4} />
            <Tool $w={24}>
              <OrientIcon />
            </Tool>
            <Caret />
            <Sep $m={6} />
            <Tool $w={26}>
              <WrapIcon />
            </Tool>
            <WrapText>自动换行</WrapText>
          </ToolRow>
          <ToolRow>
            <Tool>
              <AlignIcon h="l" />
            </Tool>
            <Tool $on>
              <AlignIcon h="c" />
            </Tool>
            <Tool>
              <AlignIcon h="r" />
            </Tool>
            <Sep $m={4} />
            <Tool>
              <IndentIcon out />
            </Tool>
            <Tool>
              <IndentIcon />
            </Tool>
            <MergeTool>
              <MergeIcon />
              合并后居中
              <Caret />
            </MergeTool>
          </ToolRow>
        </GroupBody>
        <GroupLabel $launcher>对齐方式</GroupLabel>
        <Launcher />
      </Group>
      <Group $w={148}>
        <GroupBody>
          <ToolRow>
            <Combo $w={131}>
              常规
              <ChevronDown size={16} strokeWidth={1.2} />
            </Combo>
          </ToolRow>
          <ToolRow>
            <Tool>
              <CurrencyIcon />
            </Tool>
            <Caret />
            <Tool $w={20}>
              <PercentMark>%</PercentMark>
            </Tool>
            <Tool $w={20}>
              <CommaMark>,</CommaMark>
            </Tool>
            <Sep $m={4} />
            <Tool $w={24}>
              <DecimalIcon />
            </Tool>
            <Tool $w={24}>
              <DecimalIcon down />
            </Tool>
          </ToolRow>
        </GroupBody>
        <GroupLabel $launcher>数字</GroupLabel>
        <Launcher />
      </Group>
      <Group $w={195}>
        <StackBody $pad={4}>
          <BigTool $w={58}>
            <BigIcon>
              <CondFormatIcon />
            </BigIcon>
            条件格式
            <BigCaret />
          </BigTool>
          <BigTool $w={60}>
            <BigIcon>
              <TableFormatIcon />
            </BigIcon>
            套用
            <TwoWord>
              表格格式
              <Caret />
            </TwoWord>
          </BigTool>
          <BigTool $w={64}>
            <BigIcon>
              <CellStyleIcon />
            </BigIcon>
            单元格样式
            <BigCaret />
          </BigTool>
        </StackBody>
        <GroupLabel>样式</GroupLabel>
      </Group>
      <Group $w={143}>
        <StackBody $pad={8}>
          <BigTool $w={42}>
            <BigIcon>
              <InsertCellIcon />
            </BigIcon>
            插入
            <BigCaret />
          </BigTool>
          <BigTool $w={42}>
            <BigIcon>
              <DeleteCellIcon />
            </BigIcon>
            删除
            <BigCaret />
          </BigTool>
          <BigTool $w={42}>
            <BigIcon>
              <FormatCellIcon />
            </BigIcon>
            格式
            <BigCaret />
          </BigTool>
        </StackBody>
        <GroupLabel>单元格</GroupLabel>
      </Group>
      <Group $w={232}>
        <EditBody>
          <EditStack>
            <EditRow>
              <SigmaBox>
                <Sigma size={17} strokeWidth={2.4} />
              </SigmaBox>
              自动求和
            </EditRow>
            <EditRow>
              <FillIcon />
              填充
              <Caret />
            </EditRow>
            <EditRow>
              <Eraser size={15} color="#e8708a" fill="#f2a0b0" />
              清除
              <Caret />
            </EditRow>
          </EditStack>
          <BigTool $w={60}>
            <BigIcon>
              <SortIcon />
            </BigIcon>
            排序和筛选
            <BigCaret />
          </BigTool>
          <FindTool $w={60}>
            <BigIcon>
              <FindIcon />
            </BigIcon>
            查找和选择
            <BigCaret />
          </FindTool>
        </EditBody>
        <GroupLabel>编辑</GroupLabel>
      </Group>
    </Ribbon>

    <FormulaBand>
      <NameBox>
        <Caret />
      </NameBox>
      <Grip>⋮</Grip>
      <FxBox>
        <X size={14} />
        <Check size={14} />
        <Fx>fx</Fx>
      </FxBox>
      <FormulaInput />
    </FormulaBand>

    <HeaderRow>
      <ColHead $w={139} $sel>B</ColHead>
      <ColHead $w={448} $sel>C</ColHead>
      <ColHead $w={155} $sel>D</ColHead>
      <ColHead $w={71}>E</ColHead>
      <ColHead $w={72}>F</ColHead>
      <ColHead $w={72}>G</ColHead>
      <ColHead $w={72}>H</ColHead>
      <ColHead $w={72}>I</ColHead>
      <ColHead $w={73}>J</ColHead>
      <ColHead $w={72}>K</ColHead>
    </HeaderRow>

    <Sheet>
      <Selection>
        <Table>
          <colgroup>
            <col width={136} />
            <col width={448} />
            <col width={153} />
          </colgroup>
          <tbody>
            <tr>
              <BlankCell $white />
              <BlankCell />
              <BlankCell />
            </tr>
            <tr>
              <Cell $head>内容</Cell>
              <Cell $head>添加保护</Cell>
              <Cell $head>撤销保护</Cell>
            </tr>
            <tr>
              <Cell>保护单元格区域</Cell>
              <Cell $left>审阅-允许编辑区域-新建+保护工作表</Cell>
              <Cell rowSpan={4}>哪里保护，哪里撤销</Cell>
            </tr>
            <tr>
              <Cell>保护工作表</Cell>
              <Cell $left>审阅-保护工作表 或 文件-信息-保护工作簿-保护当前工作表</Cell>
            </tr>
            <tr>
              <Cell>保护工作簿结构</Cell>
              <Cell $left>审阅-保护工作簿</Cell>
            </tr>
            <tr>
              <Cell>秘密打开工作簿</Cell>
              <Cell $left>文件-信息-保护工作簿-用秘密进行加密</Cell>
            </tr>
          </tbody>
        </Table>
        <Handle />
      </Selection>
    </Sheet>

    <TabsBar>
      <SheetTab>保护信息</SheetTab>
      <AddSheet>
        <Plus size={11} strokeWidth={2.5} />
      </AddSheet>
      <TabsGrip>⋮</TabsGrip>
      <HScroll>
        <ScrollArrow />
      </HScroll>
    </TabsBar>
    <StatusBar>
      <StatusText>辅助功能: 调查</StatusText>
      <Count>计数: 12</Count>
      <ViewBtn $on>
        <GridIcon size={14} />
      </ViewBtn>
      <ViewBtn>
        <PageViewIcon />
      </ViewBtn>
      <ViewBtn>
        <BreakViewIcon />
      </ViewBtn>
      <Zoom>
        <Minus size={10} />
        <ZoomTrack>
          <ZoomThumb />
        </ZoomTrack>
      </Zoom>
    </StatusBar>

    <Taskbar>
      <Start>
        <StartIcon />
      </Start>
      <TaskGroup>
        <TaskItem>
          <FolderIcon />
          <span>课程6保护信...</span>
        </TaskItem>
        <TaskItem>
          <FolderIcon />
          <span>Administrator</span>
        </TaskItem>
        <TaskItem>
          <IeIcon />
          <span>百度一下，你...</span>
        </TaskItem>
        <TaskItem>
          <WechatIcon />
          <span>微信</span>
        </TaskItem>
        <TaskItem>
          <FoxmailIcon />
          <span>Foxmail</span>
        </TaskItem>
        <TaskItem>
          <WeComIcon />
          <span>企业微信</span>
        </TaskItem>
        <TaskItem $w={125} $active>
          <ExcelIcon />
          <span>课程6保护信...</span>
        </TaskItem>
      </TaskGroup>
      <Tray>
        <ChevronUp size={16} />
        <Mic size={16} fill="#222" />
        <QqIcon />
        <GuardIcon />
        <BatteryIcon />
        <Wifi size={15} color="#555" />
        <Volume2 size={15} />
        <TrayIme>中</TrayIme>
        <TrayLogo>
          <SogouLogo size={17} />
        </TrayLogo>
        <ClockBox>
          <ClockTime>16:58:26</ClockTime>
          2020/3/22
        </ClockBox>
      </Tray>
    </Taskbar>

    <Watermark>
      QQ：<WatermarkNumber>10270341</WatermarkNumber>
    </Watermark>
    <KeyHint>左键</KeyHint>
    <Halo>
      <CursorIcon />
    </Halo>
    <ImeBar>
      <ImeLogo>
        <SogouLogo size={30} />
      </ImeLogo>
      <ImeIcons>
        <span>中</span>
        <span>°,</span>
        <Smile size={18} strokeWidth={2} />
        <Eraser size={17} strokeWidth={2.2} />
      </ImeIcons>
    </ImeBar>
    <Timer>00:20</Timer>
    <NetPill>
      <NetArrows>
        <ArrowUp size={9} strokeWidth={3.5} color="#d9413c" />
        <ArrowDown size={9} strokeWidth={3.5} color="#2d9b57" />
      </NetArrows>
      <NetSpeed>
        0K/s
        <br />
        0K/s
      </NetSpeed>
      <Boost>
        <Plus size={11} strokeWidth={3} />
      </Boost>
    </NetPill>
    <Gauge>52%</Gauge>
  </Page>
);

export default App;
